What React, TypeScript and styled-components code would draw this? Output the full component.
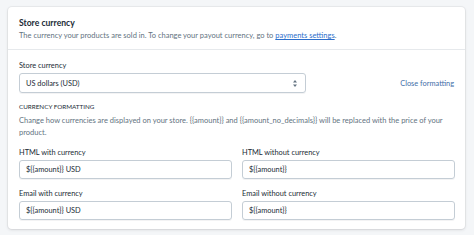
import styled, { createGlobalStyle } from "styled-components";

const GlobalStyle = createGlobalStyle`
  html, body {
    margin: 0;
    padding: 0;
    background: #f4f6f8;
  }
  body {
    font-family: Lato, "Noto Sans", sans-serif;
    color: #212b36;
  }
`;

const Page = styled.div`
  width: 474px;
  height: 235px;
  padding: 7px 9px 0 8px;
  box-sizing: border-box;
`;

const Card = styled.section`
  background: #fff;
  border-radius: 4px;
  box-shadow: 0 0 0 1px rgba(63, 63, 68, 0.05), 0 1px 3px 0 rgba(63, 63, 68, 0.15);
`;

const Header = styled.div`
  padding: 10px 11px 8px;
  border-bottom: 1px solid #e6e9ec;
`;

const Title = styled.h2`
  margin: 0 0 1px;
  font-size: 8.6px;
  font-weight: 700;
  line-height: 12px;
`;

const Subtitle = styled.p`
  margin: 0;
  font-size: 7.5px;
  line-height: 11px;
  color: #637381;
`;

const Link = styled.a`
  color: #2c6ecb;
  text-decoration: underline;
`;

const Body = styled.div`
  padding: 10px 10px 9px 11px;
`;

const FieldLabel = styled.label`
  display: block;
  font-size: 7.4px;
  line-height: 11px;
  margin-bottom: 2px;
`;

const SelectRow = styled.div`
  display: flex;
  align-items: center;
  justify-content: space-between;
`;

const SelectBox = styled.div`
  width: 287px;
  height: 20px;
  box-sizing: border-box;
  border: 1px solid #c4cdd5;
  border-radius: 3px;
  display: flex;
  align-items: center;
  justify-content: space-between;
  padding: 0 8px 0 6px;
  font-size: 7.4px;
  box-shadow: 0 1px 0 rgba(22, 29, 37, 0.05);
`;

const Arrows = styled.svg`
  width: 4px;
  height: 7px;
`;

const TextButton = styled.a`
  font-size: 7.4px;
  color: #3f6ea8;
  text-decoration: none;
  margin-right: 1px;
`;

const SectionHeading = styled.h3`
  margin: 8px 0 3px;
  font-size: 6.3px;
  font-weight: 400;
  line-height: 11px;
`;

const Help = styled.p`
  margin: 0;
  font-size: 7.5px;
  line-height: 11.5px;
  color: #637381;
`;

const Grid = styled.div`
  display: grid;
  grid-template-columns: 1fr 1fr;
  column-gap: 10px;
  row-gap: 9px;
  margin-top: 8.5px;
`;

const Field = styled.div`
  display: flex;
  flex-direction: column;
`;

const Input = styled.div`
  height: 19px;
  box-sizing: border-box;
  border: 1px solid #c4cdd5;
  border-radius: 3px;
  padding: 0 6px;
  display: flex;
  align-items: center;
  font-size: 7.4px;
  box-shadow: 0 1px 0 rgba(22, 29, 37, 0.05);
`;

const helpText =
  "Change how currencies are displayed on your store. {{amount}} and {{amount_no_decimals}} will be replaced with the price of your product.";

const fields = [
  { label: "HTML with currency", value: "${{amount}} USD" },
  { label: "HTML without currency", value: "${{amount}}" },
  { label: "Email with currency", value: "${{amount}} USD" },
  { label: "Email without currency", value: "${{amount}}" },
];

export default function App() {
  return (
    <>
      <GlobalStyle />
      <Page>
        <Card>
          <Header>
            <Title>Store currency</Title>
            <Subtitle>
              The currency your products are sold in. To change your payout currency, go to{" "}
              <Link href="#">payments settings</Link>.
            </Subtitle>
          </Header>
          <Body>
            <FieldLabel>Store currency</FieldLabel>
            <SelectRow>
              <SelectBox>
                <span>US dollars (USD)</span>
                <Arrows viewBox="0 0 4 7">
                  <path d="M2 0 L4 2.6 H0 Z M2 7 L0 4.4 H4 Z" fill="#637381" />
                </Arrows>
              </SelectBox>
              <TextButton href="#">Close formatting</TextButton>
            </SelectRow>
            <SectionHeading>CURRENCY FORMATTING</SectionHeading>
            <Help>{helpText}</Help>
            <Grid>
              {fields.map((f) => (
                <Field key={f.label}>
                  <FieldLabel>{f.label}</FieldLabel>
                  <Input>{f.value}</Input>
                </Field>
              ))}
            </Grid>
          </Body>
        </Card>
      </Page>
    </>
  );
}
